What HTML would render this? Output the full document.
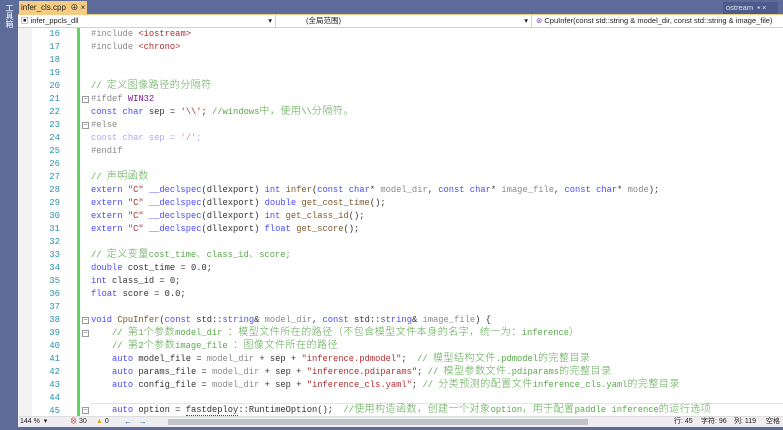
<!DOCTYPE html><html><head><meta charset="utf-8"><style>
*{margin:0;padding:0;box-sizing:border-box}
body{width:783px;height:430px;overflow:hidden;background:#fff;font-family:"Liberation Sans","Noto Sans CJK SC",sans-serif;position:relative}
.side{position:absolute;left:0;top:0;width:18px;height:430px;background:#5d6b99}
.side span{position:absolute;left:4px;top:4px;width:10px;color:#fff;font-size:8px;line-height:9px;writing-mode:vertical-rl}
.tabbar{position:absolute;left:18px;top:0;width:765px;height:14px;background:#5d6b99}
.tab{position:absolute;left:1px;top:1px;width:68px;height:14px;background:#f5cc84;font-size:8px;line-height:13px;padding-left:2px;color:#1e1e1e}
.tabR{position:absolute;right:5px;top:2px;width:55px;height:12px;background:#4d5b8b;color:#dfe3ef;font-size:7.5px;line-height:12px;padding-left:3px}
.nav{position:absolute;left:18px;top:14px;width:765px;height:14px;background:#fff;border-top:1px solid #f5cc84;border-bottom:1px solid #ccd1e0;font-size:7.5px;line-height:12px;color:#1e1e1e}
.nav div{position:absolute;top:0;height:13px;border-right:1px solid #ccd1e0}
.code{position:absolute;left:18px;top:28px;width:765px;height:388px;background:#fff;overflow:hidden}
.marg{position:absolute;left:0;top:0;width:14px;height:388px;background:#f3f3f3}
.gbar{position:absolute;left:59px;width:3px;background:#5fd35f}
.ln{position:absolute;left:14px;width:28px;text-align:right;color:#2b91af;font-family:"Liberation Mono",monospace;font-size:9px;line-height:13px}
.l{position:absolute;left:73px;height:13px;white-space:pre;font-family:"Liberation Mono",monospace;font-size:8.78px;line-height:13px;color:#333}
i{font-style:normal;font-size:10px;line-height:0;letter-spacing:0.5px;font-family:"Noto Sans CJK SC",sans-serif;font-weight:300}
.k{color:#4a4aff}.c{color:#5aa84d}.s{color:#b03030}.p{color:#8a8a8a}.m{color:#7a1a95}.f{color:#7a5a30}.pp{color:#8a8a8a}.dim{color:#a8a8ff}
.fold{position:absolute;left:64px;width:7px;height:7px;border:1px solid #999;font-size:7px;line-height:5px;text-align:center;color:#666;background:#fff}
.status{position:absolute;left:18px;top:416px;width:765px;height:11px;background:#eeeef2;border-top:1px solid #ddd;font-size:7px;line-height:10px;color:#1e1e1e}
.bottom{position:absolute;left:0;top:427px;width:783px;height:3px;background:#5d6b99}
</style></head><body>
<div class="side"><span>工具箱</span></div>
<div class="tabbar"><div class="tab">infer_cls.cpp &nbsp;⊕ ×</div><div class="tabR">ostream &nbsp;▪ ×</div></div>
<div class="nav"><div style="left:0;width:258px;padding-left:3px">▣ infer_ppcls_dll<span style="position:absolute;right:3px">▾</span></div><div style="left:258px;width:256px;padding-left:30px">(全局范围)<span style="position:absolute;right:3px">▾</span></div><div style="left:514px;width:251px;border:none;padding-left:4px"><span style="color:#8a3dbf">⊛</span> CpuInfer(const std::string &amp; model_dir, const std::string &amp; image_file)</div></div>
<div class="code">
<div class="marg"></div>
<div class="gbar" style="top:0;height:388px"></div>
<div class="ln" style="top:0">16<br>17<br>18<br>19<br>20<br>21<br>22<br>23<br>24<br>25<br>26<br>27<br>28<br>29<br>30<br>31<br>32<br>33<br>34<br>35<br>36<br>37<br>38<br>39<br>40<br>41<br>42<br>43<br>44<br>45</div>
<div class="fold" style="top:68px">−</div><div class="fold" style="top:94px">−</div><div class="fold" style="top:289px">−</div><div class="fold" style="top:302px">−</div><div class="fold" style="top:379px">−</div>
<div class="l" style="top:0"><span class="pp">#include</span> <span class="s">&lt;iostream&gt;</span></div>
<div class="l" style="top:13px"><span class="pp">#include</span> <span class="s">&lt;chrono&gt;</span></div>
<div class="l c" style="top:52px">// <i>定义图像路径的分隔符</i></div>
<div class="l" style="top:65px"><span class="pp">#ifdef</span> <span class="m">WIN32</span></div>
<div class="l" style="top:78px"><span class="k">const char</span> sep = <span class="s">'\\'</span>; <span class="c">//windows<i>中，使用</i>\\<i>分隔符。</i></span></div>
<div class="l pp" style="top:91px">#else</div>
<div class="l dim" style="top:104px">const char sep = <span style="color:#d09090">'/'</span>;</div>
<div class="l pp" style="top:117px">#endif</div>
<div class="l c" style="top:143px">// <i>声明函数</i></div>
<div class="l" style="top:156px"><span class="k">extern</span> <span class="s">"C"</span> <span class="k">__declspec</span>(dllexport) <span class="k">int</span> <span class="f">infer</span>(<span class="k">const char</span>* <span class="p">model_dir</span>, <span class="k">const char</span>* <span class="p">image_file</span>, <span class="k">const char</span>* <span class="p">mode</span>);</div>
<div class="l" style="top:169px"><span class="k">extern</span> <span class="s">"C"</span> <span class="k">__declspec</span>(dllexport) <span class="k">double</span> <span class="f">get_cost_time</span>();</div>
<div class="l" style="top:182px"><span class="k">extern</span> <span class="s">"C"</span> <span class="k">__declspec</span>(dllexport) <span class="k">int</span> <span class="f">get_class_id</span>();</div>
<div class="l" style="top:195px"><span class="k">extern</span> <span class="s">"C"</span> <span class="k">__declspec</span>(dllexport) <span class="k">float</span> <span class="f">get_score</span>();</div>
<div class="l c" style="top:221px">// <i>定义变量</i>cost_time<i>、</i>class_id<i>、</i>score;</div>
<div class="l" style="top:234px"><span class="k">double</span> cost_time = 0.0;</div>
<div class="l" style="top:247px"><span class="k">int</span> class_id = 0;</div>
<div class="l" style="top:260px"><span class="k">float</span> score = 0.0;</div>
<div class="l" style="top:286px"><span class="k">void</span> <span class="f">CpuInfer</span>(<span class="k">const</span> std::<span class="k">string</span>&amp; <span class="p">model_dir</span>, <span class="k">const</span> std::<span class="k">string</span>&amp; <span class="p">image_file</span>) {</div>
<div class="l c" style="top:299px">    // <i>第</i>1<i>个参数</i>model_dir <i>：模型文件所在的路径（不包含模型文件本身的名字，统一为：</i>inference<i>）</i></div>
<div class="l c" style="top:312px">    // <i>第</i>2<i>个参数</i>image_file <i>：图像文件所在的路径</i></div>
<div class="l" style="top:325px">    <span class="k">auto</span> model_file = <span class="p">model_dir</span> + sep + <span class="s">"inference.pdmodel"</span>;  <span class="c">// <i>模型结构文件</i>.pdmodel<i>的完整目录</i></span></div>
<div class="l" style="top:338px">    <span class="k">auto</span> params_file = <span class="p">model_dir</span> + sep + <span class="s">"inference.pdiparams"</span>; <span class="c">// <i>模型参数文件</i>.pdiparams<i>的完整目录</i></span></div>
<div class="l" style="top:351px">    <span class="k">auto</span> config_file = <span class="p">model_dir</span> + sep + <span class="s">"inference_cls.yaml"</span>; <span class="c">// <i>分类预测的配置文件</i>inference_cls.yaml<i>的完整目录</i></span></div>
<div style="position:absolute;left:73px;top:375px;width:692px;height:13px;border-top:1px solid #e5e5e5"></div>
<div class="l" style="top:376px">    <span class="k">auto</span> option = <span style="border-bottom:1px dotted #e00">fastdeploy</span>::RuntimeOption();  <span class="c">//<i>使用构造函数，创建一个对象</i>option<i>，用于配置</i>paddle inference<i>的运行选项</i></span></div>
</div>
<div class="status"><span style="position:absolute;left:2px">144 % &nbsp;▾</span><span style="position:absolute;left:52px"><span style="color:#e51400">⊗</span> 30</span><span style="position:absolute;left:78px"><span style="color:#e8a800">▲</span> 0</span><span style="position:absolute;left:106px;color:#1a5fb4;font-size:8px">← &nbsp; →</span><span style="position:absolute;left:150px;top:2px;width:420px;height:6px;background:#c2c3c9"></span><span style="position:absolute;left:656px">行: 45</span><span style="position:absolute;left:683px">字符: 96</span><span style="position:absolute;left:716px">列: 119</span><span style="position:absolute;left:748px">空格</span></div>
<div class="bottom"></div>
</body></html>
